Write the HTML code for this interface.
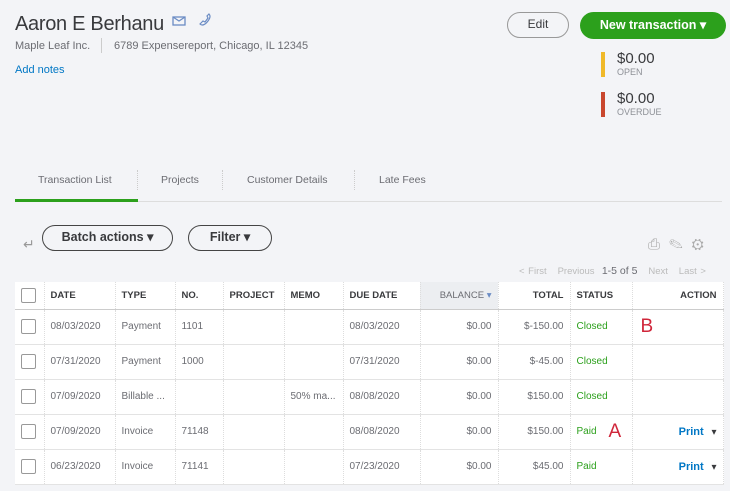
<!DOCTYPE html>
<html><head><meta charset="utf-8"><style>
*{margin:0;padding:0;box-sizing:border-box}
body{width:730px;height:491px;overflow:hidden;background:#f3f4f7;font-family:"Liberation Sans",sans-serif;position:relative;color:#393a3d}
.a{position:absolute;white-space:nowrap}
table{position:absolute;left:15px;top:282px;border-collapse:collapse;background:#fff;font-size:10px;color:#6b6c72}
td,th{height:35px;border-right:1px dotted #ddd;border-bottom:1px solid #e3e3e3;padding:0 6px;text-align:left}
th{height:27px;font-size:9.5px;font-weight:bold;color:#393a3d;border-bottom:1px solid #ccc}
.r{text-align:right}
.cb{width:15px;height:15px;border:1px solid #999;border-radius:2px;background:#fff;display:inline-block;vertical-align:middle}
.g{color:#2ca01c}
.p{color:#0077c5;font-weight:bold;font-size:11px}
.btn{position:absolute;border:1.5px solid #444;border-radius:14px;height:26px;font-size:12.5px;font-weight:bold;text-align:center;line-height:23px;color:#393a3d;background:#fff0}
</style></head><body>
<div class="a" style="left:15px;top:13px;font-size:20px;color:#393a3d;letter-spacing:-0.3px">Aaron E Berhanu</div>
<svg class="a" style="left:172px;top:16px" width="14" height="10"><rect x="1" y="1" width="12" height="8" fill="none" stroke="#6b8cc4" stroke-width="1.3"/><path d="M1 1l6 4 6-4" fill="none" stroke="#6b8cc4" stroke-width="1.2"/></svg>
<svg class="a" style="left:197px;top:13px" width="14" height="14"><path d="M3 11c2 2 5 1 8-3s2-6 1-7l-2 2 1 2-3 4-2-1-2 2z" fill="none" stroke="#6b8cc4" stroke-width="1.2"/></svg>
<div class="a" style="left:15px;top:40px;font-size:11px;color:#6b6c72">Maple Leaf Inc.</div>
<div class="a" style="left:101px;top:38px;width:1px;height:15px;background:#ccc"></div>
<div class="a" style="left:114px;top:40px;font-size:11px;color:#6b6c72">6789 Expensereport, Chicago, IL 12345</div>
<div class="a" style="left:15px;top:64px;font-size:11px;color:#0077c5">Add notes</div>
<div class="btn" style="left:507px;top:12px;width:62px;font-weight:normal;border-color:#999;border-width:1px;font-size:12px">Edit</div>
<div class="a" style="left:580px;top:12px;width:146px;height:27px;border-radius:14px;background:#2ca01c;color:#fff;font-weight:bold;font-size:12.5px;line-height:27px;text-align:center">New transaction &#9662;</div>
<div class="a" style="left:601px;top:52px;width:4px;height:25px;background:#f0b929"></div>
<div class="a" style="left:617px;top:50px;font-size:15px">$0.00</div>
<div class="a" style="left:617px;top:67px;font-size:9px;color:#8d9096">OPEN</div>
<div class="a" style="left:601px;top:92px;width:4px;height:25px;background:#c9472e"></div>
<div class="a" style="left:617px;top:90px;font-size:15px">$0.00</div>
<div class="a" style="left:617px;top:107px;font-size:9px;color:#8d9096">OVERDUE</div>
<div class="a" style="left:38px;top:174px;font-size:10.5px;color:#6b6c72">Transaction List</div>
<div class="a" style="left:137px;top:170px;height:20px;border-left:1px dotted #ccc"></div>
<div class="a" style="left:161px;top:174px;font-size:10.5px;color:#6b6c72">Projects</div>
<div class="a" style="left:222px;top:170px;height:20px;border-left:1px dotted #ccc"></div>
<div class="a" style="left:247px;top:174px;font-size:10.5px;color:#6b6c72">Customer Details</div>
<div class="a" style="left:354px;top:170px;height:20px;border-left:1px dotted #ccc"></div>
<div class="a" style="left:379px;top:174px;font-size:10.5px;color:#6b6c72">Late Fees</div>
<div class="a" style="left:99px;top:201px;width:623px;height:1px;background:#ddd"></div>
<div class="a" style="left:15px;top:199px;width:123px;height:3px;background:#2ca01c"></div>
<div class="a" style="left:23px;top:236px;font-size:14px;color:#999">&#8629;</div>
<div class="btn" style="left:42px;top:225px;width:131px">Batch actions &#9662;</div>
<div class="btn" style="left:188px;top:225px;width:84px">Filter &#9662;</div>
<div class="a" style="left:648px;top:236px;font-size:15px;color:#aaa;letter-spacing:9px">&#9113;&#9998;&#9881;</div>
<div class="a" style="left:519px;top:265px;font-size:9.5px;color:#bbb;word-spacing:1px">&lt; First &nbsp; Previous &nbsp;<span style="color:#6b6c72;font-size:10.5px;word-spacing:0">1-5 of 5</span> &nbsp; Next &nbsp; Last &gt;</div>
<table>
<tr><th style="width:29px"><span class="cb"></span></th><th style="width:71px">DATE</th><th style="width:60px">TYPE</th><th style="width:48px">NO.</th><th style="width:61px">PROJECT</th><th style="width:59px">MEMO</th><th style="width:77px">DUE DATE</th><th class="r" style="width:78px;background:#eceef1;font-weight:normal;color:#6b6c72">BALANCE <span style="color:#6b8cc4">&#9662;</span></th><th class="r" style="width:72px">TOTAL</th><th style="width:62px">STATUS</th><th class="r" style="width:91px">ACTION</th></tr>
<tr><td><span class="cb"></span></td><td>08/03/2020</td><td>Payment</td><td>1101</td><td></td><td></td><td>08/03/2020</td><td class="r">$0.00</td><td class="r">$-150.00</td><td class="g">Closed</td><td><span style="color:#d0263a;font-size:19px;margin-left:2px">B</span></td></tr>
<tr><td><span class="cb"></span></td><td>07/31/2020</td><td>Payment</td><td>1000</td><td></td><td></td><td>07/31/2020</td><td class="r">$0.00</td><td class="r">$-45.00</td><td class="g">Closed</td><td></td></tr>
<tr><td><span class="cb"></span></td><td>07/09/2020</td><td>Billable ...</td><td></td><td></td><td>50% ma...</td><td>08/08/2020</td><td class="r">$0.00</td><td class="r">$150.00</td><td class="g">Closed</td><td></td></tr>
<tr><td><span class="cb"></span></td><td>07/09/2020</td><td>Invoice</td><td>71148</td><td></td><td></td><td>08/08/2020</td><td class="r">$0.00</td><td class="r">$150.00</td><td class="g" style="position:relative">Paid<span style="position:absolute;left:38px;top:6px;color:#d0263a;font-size:19px">A</span></td><td class="r"><span class="p">Print</span> <span style="color:#393a3d;margin-left:5px">&#9662;</span></td></tr>
<tr><td><span class="cb"></span></td><td>06/23/2020</td><td>Invoice</td><td>71141</td><td></td><td></td><td>07/23/2020</td><td class="r">$0.00</td><td class="r">$45.00</td><td class="g">Paid</td><td class="r"><span class="p">Print</span> <span style="color:#393a3d;margin-left:5px">&#9662;</span></td></tr>
</table>
</body></html>
